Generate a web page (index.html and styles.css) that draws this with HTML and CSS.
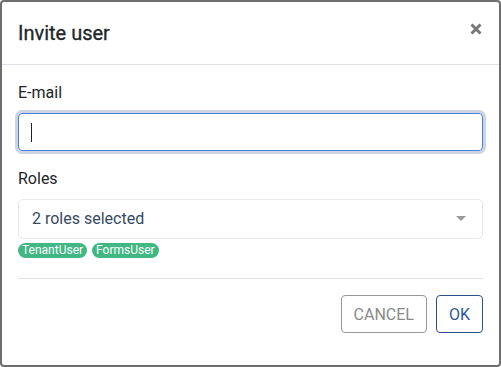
FILE: index.html
```html
<!DOCTYPE html>
<html lang="en">
<head>
<meta charset="UTF-8">
<meta name="viewport" content="width=device-width, initial-scale=1.0">
<title>Invite user</title>
<link rel="stylesheet" href="styles.css">
</head>
<body>
<div class="modal">
    <div class="modal-header">
        <h5 class="modal-title">Invite user</h5>
        <button class="close" type="button" aria-label="Close">
            <svg width="12" height="12" viewBox="0 0 12 12">
                <path d="M1.5 1.5 L10.5 10.5 M10.5 1.5 L1.5 10.5" stroke="#777" stroke-width="3" fill="none"/>
            </svg>
        </button>
    </div>
    <div class="modal-body">
        <div class="form-group">
            <label>E-mail</label>
            <div class="form-control focused"><span class="caret"></span></div>
        </div>
        <div class="form-group">
            <label>Roles</label>
            <div class="multiselect">
                <span class="multiselect-text">2 roles selected</span>
                <span class="multiselect-arrow"></span>
            </div>
            <div class="tags">
                <span class="tag">TenantUser</span>
                <span class="tag">FormsUser</span>
            </div>
        </div>
        <hr>
        <div class="modal-footer">
            <button class="btn btn-cancel" type="button">CANCEL</button>
            <button class="btn btn-ok" type="button">OK</button>
        </div>
    </div>
</div>
</body>
</html>
```
FILE: styles.css
```css
* {
    box-sizing: border-box;
}
html, body {
    margin: 0;
    height: 100%;
}
body {
    font-family: Roboto, "Liberation Sans", sans-serif;
    font-size: 16px;
    color: #212529;
    background: #fff;
}
.modal {
    height: 100%;
    border: 2px solid #6e6e6e;
    border-radius: 4px;
    background: #fff;
}
.modal-header {
    display: flex;
    align-items: center;
    justify-content: space-between;
    padding: 16px;
    border-bottom: 1px solid #dee2e6;
}
.modal-title {
    margin: 0;
    font-size: 20px;
    font-weight: 400;
    line-height: 30px;
    -webkit-text-stroke: 0.3px #212529;
}
.close {
    align-self: flex-start;
    margin: 5px 1px 0 0;
    border: none;
    background: none;
    padding: 0;
    display: flex;
}
.modal-body {
    padding: 16px;
}
.form-group {
    margin-bottom: 16px;
}
label {
    display: block;
    line-height: 24px;
    margin-bottom: 8px;
}
.form-control {
    height: 38px;
    border: 1px solid #ced4da;
    border-radius: 4px;
    padding: 6px 12px;
}
.form-control.focused {
    border-color: #4a80d6;
    box-shadow: 0 0 0 3px rgba(130, 150, 190, 0.4);
}
.caret {
    display: block;
    width: 1px;
    height: 19px;
    margin-top: 3px;
    background: #222;
}
.multiselect {
    display: flex;
    align-items: center;
    justify-content: space-between;
    height: 40px;
    border: 1px solid #e8e8e8;
    border-radius: 5px;
    padding: 0 16px 1px 13px;
    color: #35495e;
}
.multiselect-arrow {
    width: 0;
    height: 0;
    border-left: 5px solid transparent;
    border-right: 5px solid transparent;
    border-top: 5px solid #999;
}
.tags {
    display: flex;
    gap: 5px;
    margin-top: 4px;
}
.tag {
    background: #41b883;
    color: #fff;
    font-size: 12px;
    line-height: 15px;
    padding: 0 4px;
    border-radius: 8px;
}
hr {
    margin: 20px 0 0;
    border: none;
    border-top: 1px solid #dee2e6;
}
.modal-footer {
    display: flex;
    justify-content: flex-end;
    gap: 9px;
    padding-top: 16px;
}
.btn {
    font-family: Roboto, "Liberation Sans", sans-serif;
    font-size: 16px;
    height: 38px;
    padding: 0 12px;
    border-radius: 4px;
    background: #fff;
}
.btn-cancel {
    border: 1px solid #999;
    color: #8a8a8a;
}
.btn-ok {
    border: 1px solid #2c4f8a;
    color: #2c5597;
}
```
